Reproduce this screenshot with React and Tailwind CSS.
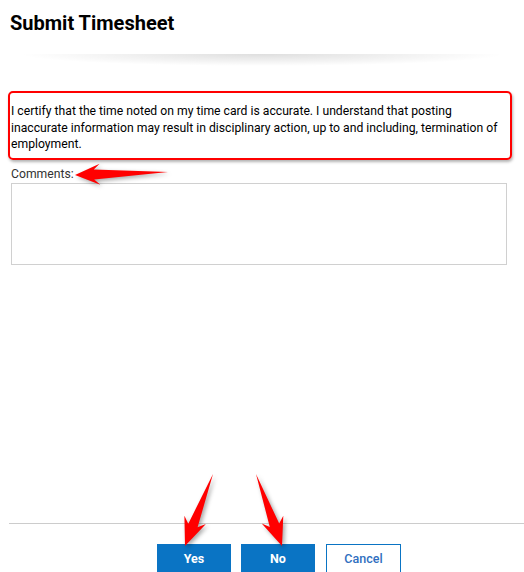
import React from "react";

// builds a wedge arrow polygon from tail to tip
const arrowPoints = (tx, ty, px, py, headLen, headHalf, neckHalf) => {
    const dx = px - tx;
    const dy = py - ty;
    const len = Math.hypot(dx, dy);
    const ux = dx / len;
    const uy = dy / len;
    const nx = -uy;
    const ny = ux;
    const bx = px - ux * headLen;
    const by = py - uy * headLen;
    const kx = px - ux * (headLen - 6);
    const ky = py - uy * (headLen - 6);
    const pts = [
        [tx, ty],
        [kx + nx * neckHalf, ky + ny * neckHalf],
        [bx + nx * headHalf, by + ny * headHalf],
        [px, py],
        [bx - nx * headHalf, by - ny * headHalf],
        [kx - nx * neckHalf, ky - ny * neckHalf],
    ];
    return pts.map((p) => p[0].toFixed(1) + "," + p[1].toFixed(1)).join(" ");
};

const Arrows = () => {
    return (
        <svg
            className="absolute left-0 top-0 pointer-events-none drop-shadow-[2px_2px_2px_rgba(0,0,0,0.35)]"
            width="524"
            height="572"
            viewBox="0 0 524 572">
            <polygon points={arrowPoints(168, 172, 75, 175, 25, 10.5, 5)} fill="#ff0000" />
            <polygon points={arrowPoints(213, 474, 185, 546, 28, 11.5, 5)} fill="#ff0000" />
            <polygon points={arrowPoints(256, 474, 282, 546, 28, 11.5, 5)} fill="#ff0000" />
        </svg>
    );
};

export default function App() {
    return (
        <div
            className="relative w-[524px] h-[572px] overflow-hidden bg-white text-black"
            style={{ fontFamily: "Roboto, 'Liberation Sans', sans-serif" }}>
            <div className="px-[10px] pt-[11px]">
                <h1 className="text-[20px] leading-[24px] font-bold">Submit Timesheet</h1>
            </div>

            <div className="mt-[19px] mx-[20px] h-[12px] bg-[radial-gradient(ellipse_50%_100%_at_50%_0%,rgba(0,0,0,0.13),rgba(0,0,0,0)_100%)]" />

            <div className="mt-[25px] ml-[8px] w-[504px] h-[69px] border-2 border-[#ff0000] rounded-[5px] shadow-[1px_2px_3px_rgba(0,0,0,0.3)] pl-[1px] pt-[10px]">
                <p className="text-[12.2px] leading-[16.5px]">
                    I certify that the time noted on my time card is accurate. I understand that posting inaccurate information may result in disciplinary action, up to and including, termination of employment.
                </p>
            </div>

            <div className="ml-[11px] mt-[6px] text-[12.2px] leading-[16px] text-[#333]">Comments:</div>
            <div className="ml-[11px] mt-[1px] w-[496px] h-[82px] border border-[#d0d0d0]" />

            <div className="ml-[9px] mt-[258px] border-t border-[#cccccc]" />
            <div className="flex pl-[157px] pt-[20px]">
                <button className="w-[74px] h-[30px] bg-[#0a74c4] text-white text-[12.5px] font-bold">Yes</button>
                <button className="ml-[10px] w-[74px] h-[30px] bg-[#0a74c4] text-white text-[12.5px] font-bold">No</button>
                <button className="ml-[11px] w-[75px] h-[30px] border border-[#0a74c4] text-[#2f6fc0] text-[12.5px] font-medium">Cancel</button>
            </div>

            <Arrows />
        </div>
    );
}
